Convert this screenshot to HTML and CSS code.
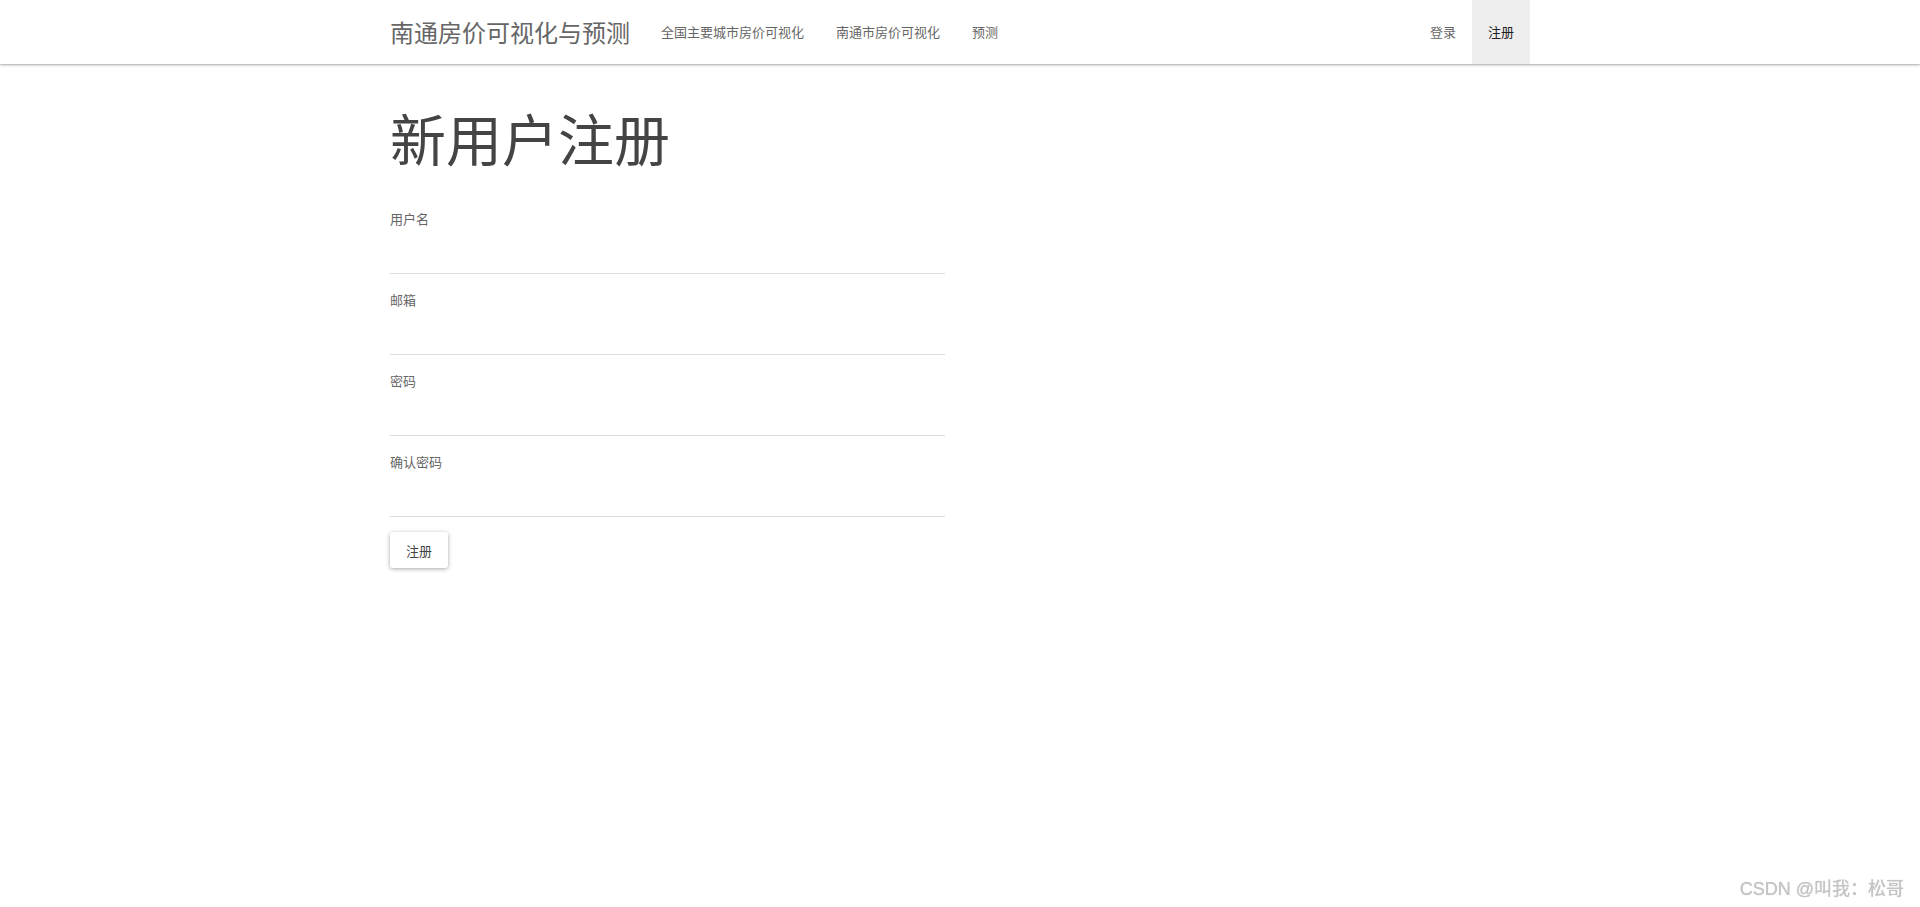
FILE: index.html
```html
<!DOCTYPE html>
<html lang="zh-CN">
<head>
  <meta charset="UTF-8">
  <title>新用户注册 - 南通房价可视化与预测</title>
  <link rel="stylesheet" href="styles.css">
</head>
<body>
  <nav class="navbar">
    <div class="container nav-inner">
      <a href="#" class="navbar-brand">南通房价可视化与预测</a>
      <ul class="nav">
        <li><a href="#">全国主要城市房价可视化</a></li>
        <li><a href="#">南通市房价可视化</a></li>
        <li><a href="#">预测</a></li>
      </ul>
      <ul class="nav nav-right">
        <li><a href="#">登录</a></li>
        <li class="active"><a href="#">注册</a></li>
      </ul>
    </div>
  </nav>

  <div class="container main">
    <div class="col">
      <h1>新用户注册</h1>
      <form>
        <div class="form-group">
          <label for="username">用户名</label>
          <input type="text" id="username" class="form-control">
        </div>
        <div class="form-group">
          <label for="email">邮箱</label>
          <input type="email" id="email" class="form-control">
        </div>
        <div class="form-group">
          <label for="password">密码</label>
          <input type="password" id="password" class="form-control">
        </div>
        <div class="form-group">
          <label for="password2">确认密码</label>
          <input type="password" id="password2" class="form-control">
        </div>
        <button type="submit" class="btn">注册</button>
      </form>
    </div>
  </div>

  <div class="watermark">CSDN @叫我：松哥</div>
</body>
</html>
```

FILE: styles.css
```css
body {
  margin: 0;
  font-family: "Noto Sans CJK SC", "Noto Sans", sans-serif;
  font-size: 13px;
  color: #666;
  background: #fff;
}
.container {
  width: 1170px;
  margin: 0 auto;
  padding: 0 15px;
  box-sizing: border-box;
}
.navbar {
  height: 64px;
  background: #fff;
  box-shadow: 0 1px 2px rgba(0,0,0,0.3), 0 1px 4px rgba(0,0,0,0.08);
}
.nav-inner {
  display: flex;
  align-items: stretch;
  height: 64px;
}
.navbar-brand {
  margin-left: -15px;
  padding: 0 15px;
  font-size: 24px;
  line-height: 64px;
  color: #666;
  text-decoration: none;
}
.nav {
  display: flex;
  list-style: none;
  margin: 0;
  padding: 0;
}
.nav a {
  display: block;
  padding: 0 16px;
  line-height: 64px;
  font-size: 13px;
  color: #666;
  text-decoration: none;
}
.nav-right {
  margin-left: auto;
}
.nav .active a {
  background: #eee;
  color: #212121;
}
.main {
  padding-top: 21px;
  padding-bottom: 20px;
}
.col {
  width: 555px;
}
h1 {
  margin: 21px 0 39px;
  font-size: 56px;
  font-weight: normal;
  line-height: 62px;
  color: #444;
}
.form-group {
  margin-bottom: 14px;
}
label {
  display: block;
  margin-bottom: 5px;
  line-height: 24px;
  color: #666;
}
.form-control {
  display: block;
  width: 100%;
  height: 38px;
  padding: 0;
  border: none;
  outline: none;
  background: transparent;
  box-shadow: inset 0 -1px 0 #ddd;
  font-family: inherit;
  font-size: 16px;
  color: #666;
}
.btn {
  margin-top: 1px;
  width: 58px;
  height: 36px;
  padding: 0;
  border: none;
  border-radius: 3px;
  background: #fff;
  box-shadow: 0 1px 4px rgba(0,0,0,0.35);
  font-family: inherit;
  font-size: 13px;
  color: #444;
  cursor: pointer;
}
.watermark {
  position: fixed;
  right: 16px;
  bottom: 7px;
  font-family: "Liberation Sans", "Noto Sans CJK TC", sans-serif;
  font-size: 18px;
  color: #c4c4c4;
  text-shadow: 0 0 1px rgba(0,0,0,0.25);
}
```
